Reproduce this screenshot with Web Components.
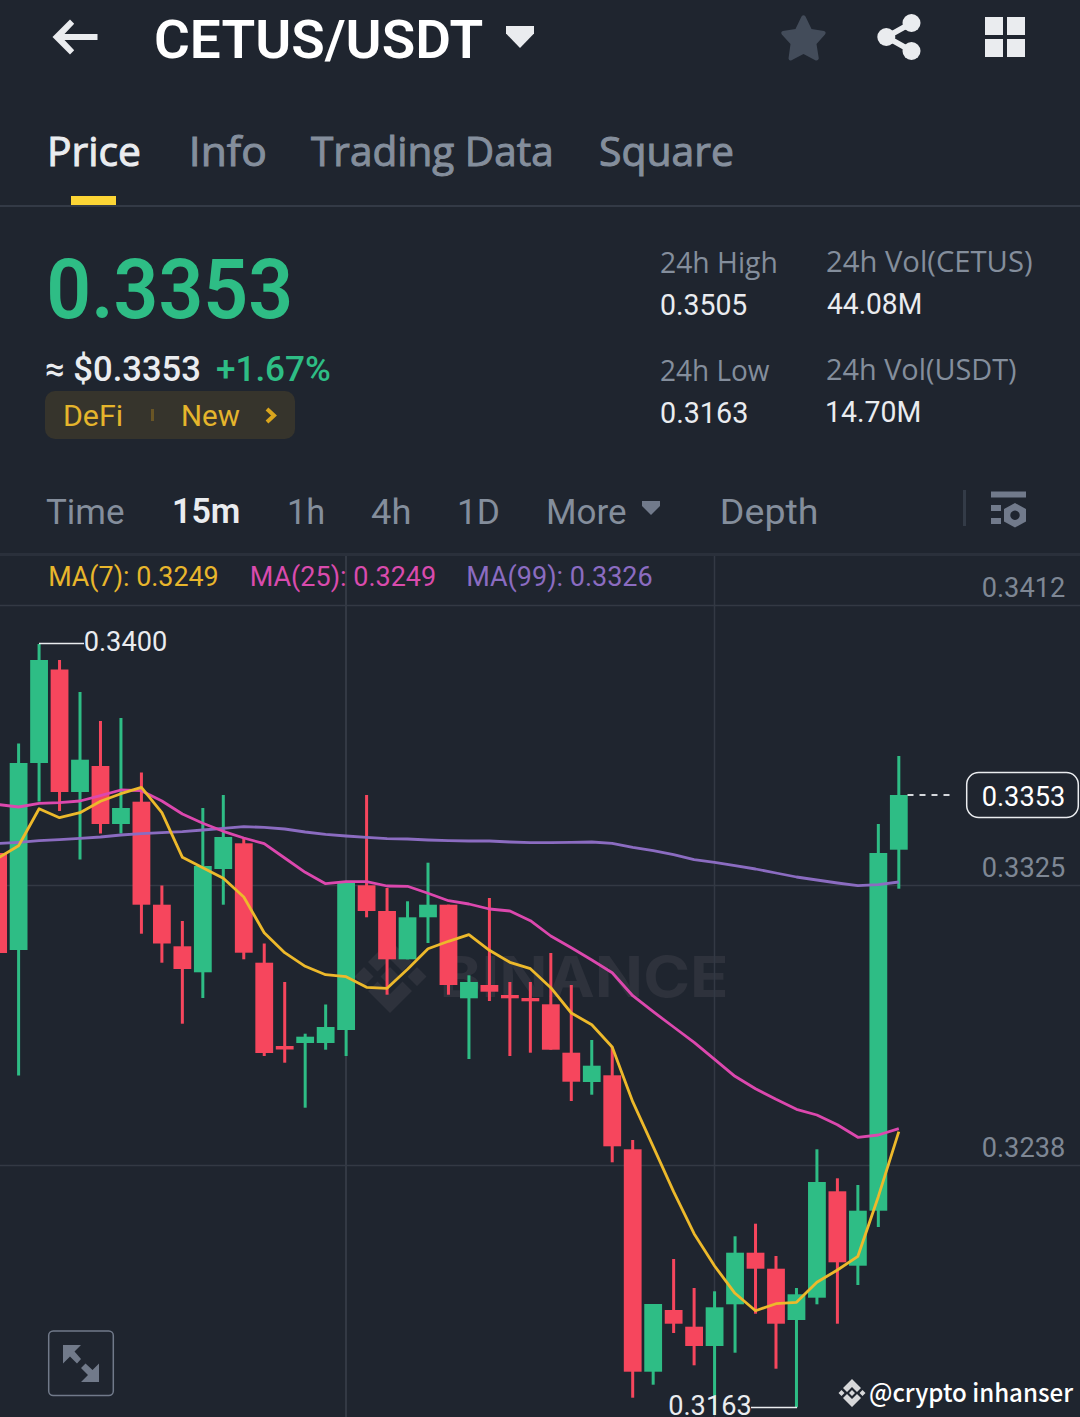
<!DOCTYPE html>
<html lang="en">
<head>
<meta charset="utf-8">
<title>CETUS/USDT</title>
<style>
  body {
    margin: 0;
    width: 1080px;
    height: 1417px;
    overflow: hidden;
    background: #1f252f;
    color: #eaecef;
    font-family: Roboto, "Liberation Sans", sans-serif;
  }
</style>
</head>
<body>
<market-page></market-page>

<script>
// One line of text whose visible width is fixed with the w attribute
class FitText extends HTMLElement {
  constructor() {
    super();
    this.attachShadow({ mode: "open" });
    this.shadowRoot.innerHTML = `
      <style>
        :host { display: block; flex: none; white-space: nowrap; }
        span { display: inline-block; transform-origin: 0 50%; }
      </style>
      <span><slot></slot></span>`;
  }
  connectedCallback() {
    const w = Number(this.getAttribute("w"));
    const cs = getComputedStyle(this);
    const ctx = document.createElement("canvas").getContext("2d");
    ctx.font = `${cs.fontWeight} ${cs.fontSize} ${cs.fontFamily}`;
    // the text may come through an outer slot, so flatten
    const nodes = this.shadowRoot.querySelector("slot").assignedNodes({ flatten: true });
    const m = ctx.measureText(nodes.map(n => n.textContent).join("").trim());
    const k = w / (m.actualBoundingBoxLeft + m.actualBoundingBoxRight);
    this.style.width = w + "px";
    this.shadowRoot.querySelector("span").style.transform =
      `translateX(${m.actualBoundingBoxLeft * k}px) scaleX(${k})`;
  }
}

class PairHeader extends HTMLElement {
  constructor() {
    super();
    this.attachShadow({ mode: "open" });
    this.shadowRoot.innerHTML = `
      <style>
        :host { display: flex; align-items: center; height: 74px; padding: 0 55px 0 52px; }
        svg { display: block; flex: none; fill: #eaecef; }
        fit-text { margin: 6px 23px 0 58px; font-size: 54px; line-height: 64px; font-weight: 600; color: #fff; }
        .actions { display: flex; align-items: center; margin-left: auto; }
        .star { fill: #434c5a; margin: 2px 51.500px 0 0; }
        .share { margin-right: 64px; }
      </style>
      <svg width="46" height="36" viewBox="0 0 46 36">
        <path d="M.5 18 18 .5l4.200 4.300L12.500 15H45.500v6H12.500l9.700 10.200L18 35.500z"/>
      </svg>
      <fit-text w="327"><slot></slot></fit-text>
      <svg width="28" height="22" viewBox="0 0 28 22"><path d="M0 0h28v7.500L14 22 0 7.500z"/></svg>
      <div class="actions">
        <svg class="star" width="45" height="46" viewBox="0 0 45 46">
          <path d="M20.500 1.500q2-2.500 4 0L30.500 14l12.500 2q2.700 1 1 3.500L35.500 29l2.300 14.500q-1 3-4 1.500L22.500 39 11 45q-3 1.500-3.500-1.500L9.500 29 .8 19.500q-1.500-2.500 1-3.500l12.700-2z"/>
        </svg>
        <svg class="share" width="44" height="46" viewBox="0 0 44 46">
          <path d="M34.500 9 9.500 23l25 14" fill="none" stroke="#eaecef" stroke-width="5.500"/>
          <circle cx="34.500" cy="9" r="9"/><circle cx="9.300" cy="23" r="9"/><circle cx="34.500" cy="37" r="9"/>
        </svg>
        <svg width="40" height="40" viewBox="0 0 40 40">
          <path d="M0 0h18v18H0zM22 0h18v18H22zM0 22h18v18H0zM22 22h18v18H22z"/>
        </svg>
      </div>`;
  }
}

class PageTab extends HTMLElement {
  constructor() {
    super();
    this.attachShadow({ mode: "open" });
    this.shadowRoot.innerHTML = `
      <style>
        :host {
          display: flex; flex-direction: column; align-items: center; justify-content: space-between;
          height: 81px; color: #848e9c; font: 400 41px/52px "Open Sans", sans-serif;
          -webkit-text-stroke: 1px currentColor;
        }
        :host([active]) { color: #eaecef; }
        :host([active])::after { content: ""; width: 45px; height: 9px; margin-right: 3px; background: #fcd535; }
      </style>
      <fit-text w="${this.getAttribute("w")}"><slot></slot></fit-text>`;
  }
}

class PriceSummary extends HTMLElement {
  constructor() {
    super();
    this.attachShadow({ mode: "open" });
    this.shadowRoot.innerHTML = `
      <style>
        :host { display: flex; height: 263px; box-sizing: border-box; }
        .price { width: 616px; padding: 41px 0 0 45px; }
        .last { margin-left: 5px; font-size: 83px; line-height: 84px; font-weight: 600; color: #2ebd85; }
        .change { display: flex; gap: 18px; margin: 16px 0 0 1px; font-size: 35px; line-height: 43px; font-weight: 500; }
        .up { color: #2ebd85; }
        .tags {
          display: flex; align-items: center; box-sizing: border-box; width: 250px; height: 48px; padding-left: 20px;
          border-radius: 10px; background: #36342c; color: #e5b52c; font-size: 29px; line-height: 48px;
        }
        .tags fit-text { margin-top: 2px; }
        .bar { width: 3px; height: 12px; margin: 0 29px; background: #695525; }
        .tags svg { margin-left: 25px; }
      </style>
      <div class="price">
        <fit-text class="last" w="240">0.3353</fit-text>
        <div class="change">
          <fit-text w="153">≈ $0.3353</fit-text>
          <fit-text class="up" w="113">+1.67%</fit-text>
        </div>
        <div class="tags">
          <fit-text w="57">DeFi</fit-text>
          <span class="bar"></span>
          <fit-text w="57">New</fit-text>
          <svg width="12" height="17" viewBox="0 0 12 17"><path d="M2 2l7 6.500L2 15" fill="none" stroke="#d9a51d" stroke-width="4"/></svg>
        </div>
      </div>
      <slot></slot>`;
  }
}

class StatColumn extends HTMLElement {
  constructor() {
    super();
    this.attachShadow({ mode: "open" });
    this.shadowRoot.innerHTML = `
      <style>
        :host { display: flex; flex-direction: column; gap: 24px; flex: none; width: 166px; padding-top: 35px; }
        :host(:last-child) { padding-top: 34px; width: auto; }
      </style>
      <slot></slot>`;
  }
}

class StatItem extends HTMLElement {
  constructor() {
    super();
    this.attachShadow({ mode: "open" });
    const [lw, vw] = this.getAttribute("widths").split(" ");
    this.shadowRoot.innerHTML = `
      <style>
        :host { display: block; font-size: 29px; line-height: 42px; }
        .label { color: #848e9c; font-family: "Open Sans", sans-serif; position: relative; top: -1px; }
      </style>
      <fit-text class="label" w="${lw}">${this.getAttribute("label")}</fit-text>
      <fit-text class="value" w="${vw}"><slot></slot></fit-text>`;
  }
}

class IntervalBar extends HTMLElement {
  constructor() {
    super();
    this.attachShadow({ mode: "open" });
    this.shadowRoot.innerHTML = `
      <style>
        :host {
          display: flex; align-items: center; height: 83px; padding: 0 54px 0 46px;
          border-bottom: 3px solid #2a303b; color: #848e9c; font-size: 35px; line-height: 44px;
        }
        fit-text { margin-top: 2px; }
        .on { color: #eaecef; font-weight: 600; margin: 0 50px 0 50px; }
        svg { fill: #717a8b; flex: none; }
        .caret { margin: -8px 62px 0 16px; }
        .rule { width: 3px; height: 36px; margin: -7px 25px 0 auto; background: #333b47; }
        .tools { margin-top: -5px; }
      </style>
      <fit-text w="78">Time</fit-text>
      <fit-text class="on" w="65">15m</fit-text>
      <fit-text w="34">1h</fit-text>
      <fit-text w="38" style="margin-left:48px">4h</fit-text>
      <fit-text w="39" style="margin-left:50px">1D</fit-text>
      <fit-text w="78" style="margin-left:50px">More</fit-text>
      <svg class="caret" width="18" height="14" viewBox="0 0 18 14"><path d="M0 0h18v5L9 14 0 5z"/></svg>
      <fit-text w="94">Depth</fit-text>
      <span class="rule"></span>
      <svg class="tools" width="35" height="37" viewBox="0 0 35 37">
        <path d="M0 .5h35v6H0zM0 14h10v6H0zM0 27h10v6H0z"/>
        <path fill-rule="evenodd" d="M24 12l11 6v12.500L24 36.500 13 30.500V18zM24 19.500a4.700 4.700 0 1 0 .01 0z"/>
      </svg>`;
  }
}

const X0 = 18.6, STEP = 20.47;
// direction, high, body top, body bottom, low
const CANDLES = [
  ["r", 853, 853, 953, 953],
  ["g", 743.5, 763, 950, 1075.5], ["g", 644, 660, 763, 801.5], ["r", 660, 669.5, 792, 811],
  ["g", 692, 759.7, 792, 859.5], ["r", 721, 766, 824, 833.5], ["g", 718, 808, 824, 833.5],
  ["r", 772.5, 801.7, 904.7, 933.7], ["r", 885.5, 904.7, 943.5, 962.7], ["r", 921, 946.3, 969, 1023.7],
  ["g", 808, 866, 972.3, 998], ["g", 795, 837, 869, 904.7], ["r", 838, 843.3, 952.7, 959.3],
  ["r", 943.5, 962.7, 1053, 1056], ["r", 982, 1046, 1049.5, 1062.7], ["g", 1033.7, 1036.7, 1043, 1107.7],
  ["g", 1004.5, 1027, 1043, 1049.7], ["g", 882.7, 882.7, 1030, 1056], ["r", 795, 885.3, 911, 917.3],
  ["r", 888, 911, 959.3, 994.7], ["g", 901.3, 917.3, 959.3, 959.3], ["g", 862.7, 904.7, 917.3, 943],
  ["r", 904.7, 904.7, 985, 994.7], ["g", 975.3, 982, 998.3, 1059], ["r", 898, 985, 991.7, 1001],
  ["r", 982, 995, 998.3, 1056], ["r", 982, 998, 1001.3, 1052.7], ["r", 953, 1004.3, 1049.7, 1049.7],
  ["r", 985, 1052.7, 1081.7, 1101], ["g", 1040, 1065.7, 1082, 1094.7], ["r", 1046.7, 1075.3, 1146.3, 1162.3],
  ["r", 1140, 1149.3, 1371.7, 1397.7], ["g", 1304, 1304, 1371.7, 1384.7], ["r", 1259, 1310, 1323.7, 1333],
  ["r", 1288, 1326.7, 1346, 1365.3], ["g", 1291.3, 1307.3, 1346, 1415], ["g", 1236.3, 1252.7, 1304.3, 1352.7],
  ["r", 1223.7, 1252.7, 1268.7, 1313.7], ["r", 1256, 1268.7, 1323.7, 1368.7], ["g", 1288, 1294.3, 1320, 1407.3],
  ["g", 1149.3, 1182, 1297.7, 1304.3], ["r", 1178.3, 1191.3, 1262.3, 1323.7], ["g", 1185, 1210.7, 1265.7, 1285],
  ["g", 824, 853, 1210.7, 1227], ["g", 756, 795, 849.7, 888.7]
];
const MA7 = [858, 845.7, 808.7, 817.7, 812.7, 801.3, 793.7, 787.3, 812.7, 857.3, 867.7, 878.3, 897, 932.7, 952.7,
  966.3, 974.7, 976.7, 987.3, 988.3, 969.3, 948.7, 941.3, 934.7, 950.3, 962.3, 968.7, 987.7, 1013, 1024.7, 1047,
  1101.7, 1146.7, 1191.7, 1233.7, 1266, 1293.3, 1310.7, 1303.7, 1302.3, 1282.3, 1270, 1256.3, 1196.7, 1131.7];
const MA25 = [804.5, 807, 803.3, 802.7, 801, 795.7, 790, 790.7, 801, 814, 823.3, 831.3, 838, 843.7, 858, 872.3,
  883.7, 881.7, 881.7, 886, 886.3, 893.3, 900.7, 904, 909, 911, 920.7, 936, 947.7, 960, 972.7, 995.7, 1011.7,
  1027, 1042.3, 1059.3, 1076.3, 1088.7, 1099.3, 1109.3, 1115, 1124.7, 1137.3, 1135, 1128.7];
const MA99 = [843.5, 842.3, 840.7, 839.7, 838.3, 837, 835, 833.7, 832.7, 831.7, 830, 828.3, 826.7, 827.3, 829, 832,
  834.3, 836, 837.3, 838.7, 839, 840, 840.7, 841, 841, 842, 842.7, 842.7, 842.3, 842, 843.3, 847.3, 850.7, 854.7,
  859.7, 862.3, 865.7, 869, 873, 877, 880, 883, 885.7, 884.7, 882];

class CandleChart extends HTMLElement {
  constructor() {
    super();
    this.attachShadow({ mode: "open" });
    const x = i => X0 + STEP * (i - 1);
    const candles = CANDLES.map(([dir, high, top, bottom, low], i) => `
      <g class="${dir}">
        <rect x="${x(i) - 1.5}" y="${high}" width="3" height="${low - high}"/>
        <rect x="${x(i) - 8.9}" y="${top}" width="17.8" height="${bottom - top}"/>
      </g>`).join("");
    const line = (values, color) =>
      `<polyline stroke="${color}" points="${values.map((y, i) => x(i).toFixed(1) + "," + y).join(" ")}"/>`;
    const label = (str, left, base, w, color) =>
      `<text x="${left - 1.3}" y="${base}" textLength="${w + 2.5}" lengthAdjust="spacingAndGlyphs" fill="${color}">${str}</text>`;

    this.shadowRoot.innerHTML = `
      <style>
        :host { display: block; height: 861px; }
        svg { display: block; }
        text { font: 27.500px Roboto, sans-serif; }
        .g { fill: #2ebd85; }
        .r { fill: #f6465d; }
        .grid { stroke: #333944; fill: none; }
        .ma { fill: none; stroke-width: 2.800; stroke-linejoin: round; }
        .mark { fill: #2e323c; }
        .brand { font: 700 56px Inter, sans-serif; }
        .user { font: 500 25px "Noto Sans CJK SC", sans-serif; }
      </style>
      <svg width="1080" height="861" viewBox="0 556 1080 861">
        <g class="mark">
          <path d="M390 940l22 22-9.500 9.500L390 959l-12.500 12.500L368 962zM390 1013l-22-22 9.500-9.500L390 994l12.500-12.500L412 991zM390 967l9.500 9.500L390 986l-9.500-9.500zM364 967l9.500 9.500L364 986l-9.500-9.500zM417 967l9.500 9.500L417 986l-9.500-9.500z"/>
          <text class="brand" x="439.500" y="996.500" textLength="289" lengthAdjust="spacingAndGlyphs">BINANCE</text>
        </g>
        <path class="grid" stroke-width="1.500" d="M0 605.500H1080M0 885.500H1080M0 1165.500H1080M714.500 556V1417"/>
        <path class="grid" stroke-width="2" d="M346 556V1417"/>
        ${candles}
        <g class="ma">
          ${line(MA99, "#8b6cc1")}
          ${line(MA25, "#dc48ae")}
          ${line(MA7, "#edb92b")}
        </g>
        ${label("MA(7): 0.3249", 49.5, 586, 168, "#e8b62c")}
        ${label("MA(25): 0.3249", 251, 586, 184, "#d94bad")}
        ${label("MA(99): 0.3326", 467.5, 586, 184, "#8b6cc1")}
        ${label("0.3412", 983, 597, 81, "#7e8794")}
        ${label("0.3325", 983, 877, 81, "#7e8794")}
        ${label("0.3238", 983, 1157, 81, "#7e8794")}
        ${label("0.3400", 85, 651, 81, "#eaecef")}
        ${label("0.3163", 669.5, 1415, 81, "#eaecef")}
        <path d="M39 643.500H84M751 1407.500H797" stroke="#eaecef" stroke-width="1.500"/>
        <path d="M907.500 795H951" stroke="#d5d8dc" stroke-width="2" stroke-dasharray="6 6"/>
        <rect x="966.700" y="772.500" width="111.600" height="45" rx="12" fill="#1f252f" stroke="#eaecef" stroke-width="1.500"/>
        ${label("0.3353", 983, 806, 81, "#fff")}
        <rect x="48.700" y="1331" width="64.600" height="64.500" rx="4.500" fill="none" stroke="#717a8a" stroke-width="1.500"/>
        <path fill="#717a8a" d="M63 1345h18l-6.500 6.500 6.500 7.500-4 4.500-7-7-7 7zM99 1382H81l7-7-7-7 4.500-4.500 7 6.500 6.500-6.500z"/>
        <path fill="#d6d7d9" d="M852 1379l9 9-4 4-5-5-5 5-4-4zM852 1407l-9-9 4-4 5 5 5-5 4 4zM852 1390l3 3-3 3-3-3zM841.500 1390l3 3-3 3-3-3zM862.500 1390l3 3-3 3-3-3z"/>
        <text class="user" x="869" y="1402" textLength="204" lengthAdjust="spacingAndGlyphs" fill="#fff">@crypto inhanser</text>
      </svg>`;
  }
}

class MarketPage extends HTMLElement {
  constructor() {
    super();
    this.attachShadow({ mode: "open" });
    this.shadowRoot.innerHTML = `
      <style>
        :host { display: flex; flex-direction: column; }
        nav { display: flex; gap: 46px; margin-top: 50px; padding-left: 51px; border-bottom: 2px solid #333a46; }
        .info { margin-left: 8px; }
        .square { margin-left: 4px; }
      </style>
      <pair-header>CETUS/USDT</pair-header>
      <nav>
        <page-tab w="88" active>Price</page-tab>
        <page-tab w="72" class="info">Info</page-tab>
        <page-tab w="240">Trading Data</page-tab>
        <page-tab w="131" class="square">Square</page-tab>
      </nav>
      <price-summary>
        <stat-column>
          <stat-item label="24h High" widths="115 86">0.3505</stat-item>
          <stat-item label="24h Low" widths="109 86">0.3163</stat-item>
        </stat-column>
        <stat-column>
          <stat-item label="24h Vol(CETUS)" widths="205 93">44.08M</stat-item>
          <stat-item label="24h Vol(USDT)" widths="189 92">14.70M</stat-item>
        </stat-column>
      </price-summary>
      <interval-bar></interval-bar>
      <candle-chart></candle-chart>`;
  }
}

customElements.define("fit-text", FitText);
customElements.define("pair-header", PairHeader);
customElements.define("page-tab", PageTab);
customElements.define("price-summary", PriceSummary);
customElements.define("stat-column", StatColumn);
customElements.define("stat-item", StatItem);
customElements.define("interval-bar", IntervalBar);
customElements.define("candle-chart", CandleChart);
customElements.define("market-page", MarketPage);
</script>
</body>
</html>
